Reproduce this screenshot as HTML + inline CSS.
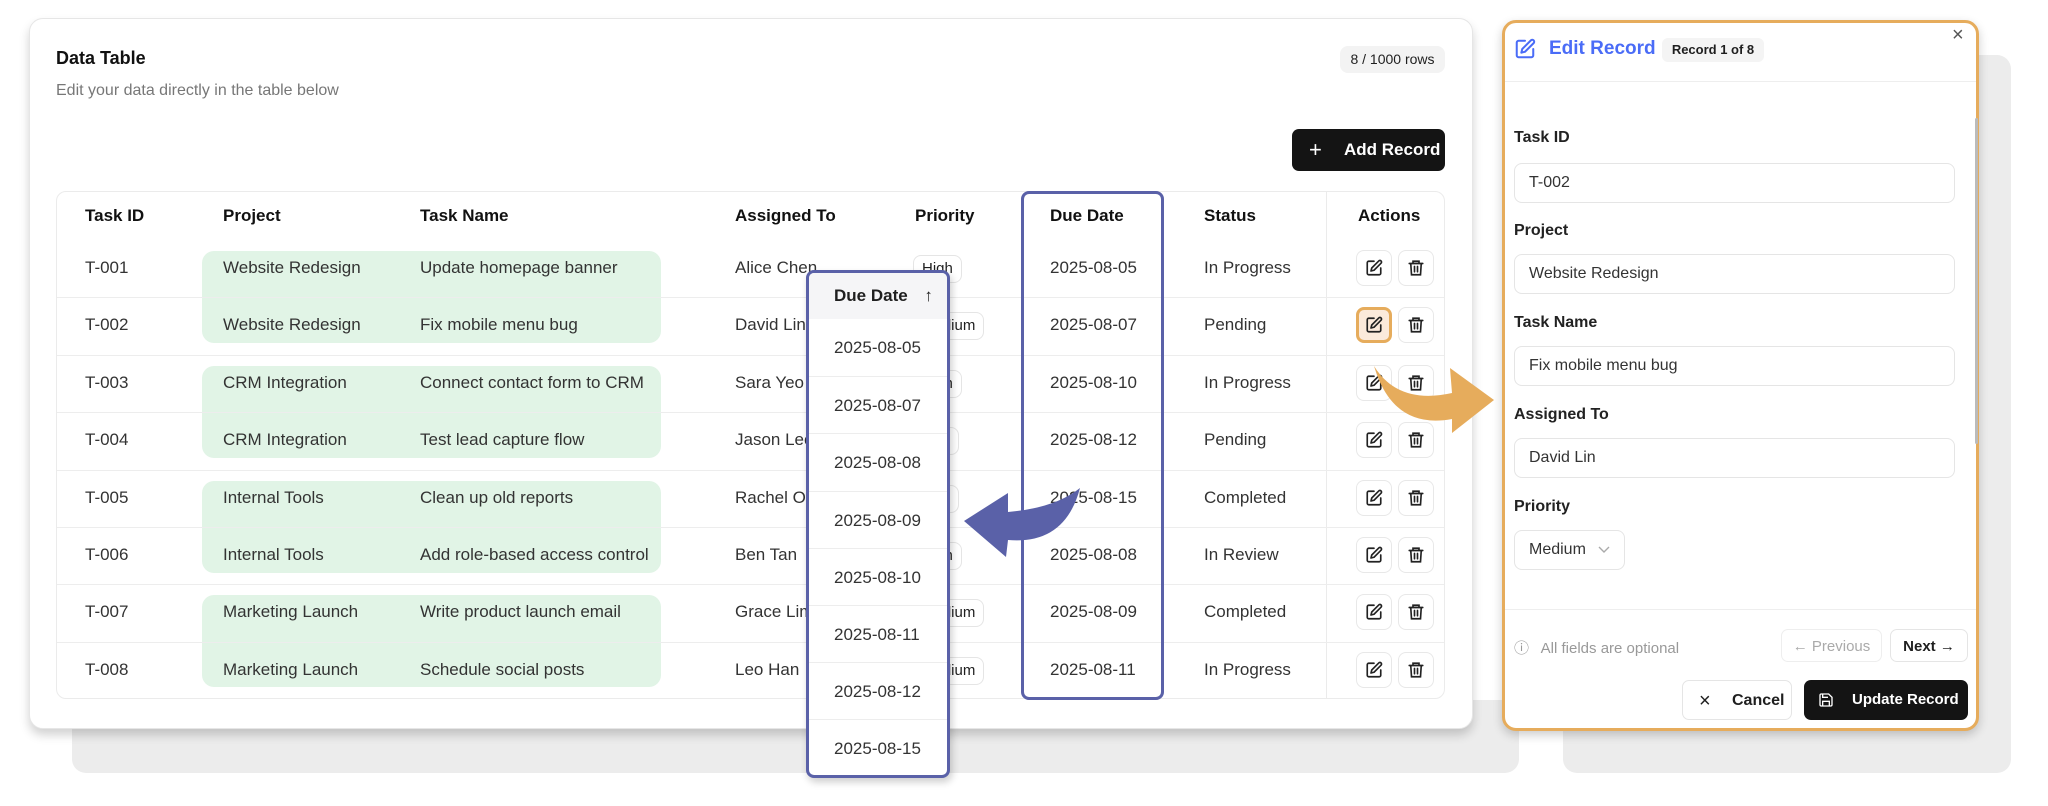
<!DOCTYPE html>
<html><head><meta charset="utf-8"><style>
*{box-sizing:border-box;margin:0;padding:0}
body{width:2048px;height:806px;background:#fff;position:relative;overflow:hidden;font-family:"Liberation Sans",sans-serif;color:#1f1f1f}
.abs{position:absolute}
.card{left:29px;top:18px;width:1444px;height:711px;background:#fff;border:1px solid #e6e6e6;border-radius:14px;box-shadow:0 6px 10px rgba(0,0,0,.18)}
.t{position:absolute;font-size:17px;white-space:nowrap}
.hd{font-weight:bold;color:#111}
.btn{position:absolute;width:36px;height:36px;border:1px solid #e8e8e8;border-radius:8px;background:#fff;display:flex;align-items:center;justify-content:center}
.badge{position:absolute;height:28px;border:1px solid #e5e5e5;border-radius:8px;font-size:15px;padding:4px 8px;background:#fff}
.lbl{position:absolute;left:1514px;font-size:16px;font-weight:bold;color:#222}
.inp{position:absolute;left:1514px;width:441px;height:40px;border:1px solid #e5e5e5;border-radius:8px;font-size:16px;padding:10px 14px;color:#333;white-space:nowrap}
</style></head><body>
<div class="abs" style="left:72px;top:700px;width:1447px;height:73px;background:#ececec;border-radius:0 0 14px 14px"></div>
<div class="abs" style="left:1563px;top:55px;width:448px;height:718px;background:#ececec;border-radius:14px"></div>
<div class="abs card"></div>
<div class="t hd" style="left:56px;top:48px;font-size:18px">Data Table</div>
<div class="t" style="left:56px;top:82px;font-size:16px;color:#777">Edit your data directly in the table below</div>
<div class="abs" style="left:1340px;top:46px;width:105px;height:27px;background:#f3f3f3;border-radius:8px;font-size:14px;text-align:center;line-height:27px">8 / 1000 rows</div>
<div class="abs" style="left:1292px;top:129px;width:153px;height:42px;background:#141414;border-radius:7px;color:#fff;font-size:17px;font-weight:bold;line-height:42px"><span style="position:absolute;left:17px;font-weight:normal;font-size:22px">+</span><span style="position:absolute;left:52px">Add Record</span></div>
<div class="abs" style="left:56px;top:191px;width:1389px;height:508px;border:1px solid #ebebeb;border-radius:10px"></div>
<div class="abs" style="left:1326px;top:191px;width:1px;height:508px;background:#ebebeb"></div>
<div id="rows"></div>
<div class="abs" style="left:1021px;top:191px;width:143px;height:509px;border:3px solid #5a61a8;border-radius:8px"></div>
<div class="abs" style="left:806px;top:270px;width:144px;height:508px;border:3px solid #5a61a8;border-radius:8px;background:#fff;box-shadow:2px 4px 8px rgba(0,0,0,.2);overflow:hidden" id="pop"></div>
<svg class="abs" style="left:0;top:0" width="2048" height="806">
<path d="M964,521 L1008,493 L1008,512 Q1055,508 1080,488 Q1065,545 1008,540 L1006,557 Z" fill="#5a61a8"/>
<path d="M1374,366 Q1398,405 1452,393 L1450,368 L1494,400 L1452,433 L1452,419 Q1393,430 1374,366 Z" fill="#e6ac5c"/>
</svg>
<div class="abs" style="left:1502px;top:20px;width:477px;height:711px;border:3px solid #e6ac5c;border-radius:14px;background:#fff;box-shadow:0 4px 10px rgba(0,0,0,.2)"></div>
<svg class="abs" style="left:1514px;top:38px" width="22" height="22" viewBox="0 0 24 24" fill="none" stroke="#4a6cf7" stroke-width="2.2" stroke-linecap="round" stroke-linejoin="round"><path d="M12 3H5a2 2 0 0 0-2 2v14a2 2 0 0 0 2 2h14a2 2 0 0 0 2-2v-7"/><path d="M18.4 2.6a2.1 2.1 0 0 1 3 3L12 15l-4 1 1-4z"/></svg>
<div class="t" style="left:1549px;top:38px;font-size:19px;color:#4a6cf7;font-weight:bold">Edit Record</div>
<div class="abs" style="left:1662px;top:38px;width:102px;height:24px;background:#f4f4f4;border-radius:6px;font-size:13px;font-weight:bold;text-align:center;line-height:24px">Record 1 of 8</div>
<div class="t" style="left:1952px;top:24px;font-size:20px;color:#555">×</div>
<div class="abs" style="left:1505px;top:81px;width:471px;height:1px;background:#eee"></div>
<div class="abs" style="left:1975px;top:118px;width:3px;height:326px;background:#bbb;border-radius:2px"></div>
<div class="lbl" style="top:129px">Task ID</div><div class="inp" style="top:163px">T-002</div>
<div class="lbl" style="top:222px">Project</div><div class="inp" style="top:254px">Website Redesign</div>
<div class="lbl" style="top:314px">Task Name</div><div class="inp" style="top:346px">Fix mobile menu bug</div>
<div class="lbl" style="top:406px">Assigned To</div><div class="inp" style="top:438px">David Lin</div>
<div class="lbl" style="top:498px">Priority</div><div class="inp" style="top:530px;width:111px">Medium <svg width="12" height="8" style="margin-left:8px" viewBox="0 0 12 8"><path d="M1 1l5 5 5-5" stroke="#aaa" fill="none" stroke-width="1.4"/></svg></div>
<div class="abs" style="left:1505px;top:609px;width:471px;height:1px;background:#eee"></div>
<div class="t" style="left:1514px;top:637px;font-size:15px;color:#999">ⓘ&nbsp;&nbsp; All fields are optional</div>
<div class="abs" style="left:1781px;top:629px;width:101px;height:33px;border:1px solid #eee;border-radius:7px;font-size:15px;color:#aaa;text-align:center;line-height:33px">← Previous</div>
<div class="abs" style="left:1890px;top:629px;width:78px;height:33px;border:1px solid #e5e5e5;border-radius:7px;font-size:15px;font-weight:bold;text-align:center;line-height:33px">Next →</div>
<div class="abs" style="left:1682px;top:680px;width:110px;height:40px;border:1px solid #e5e5e5;border-radius:7px;font-size:16px;font-weight:bold;line-height:40px"><span style="position:absolute;left:16px;font-weight:normal;font-size:20px">×</span><span style="position:absolute;left:49px">Cancel</span></div>
<div class="abs" style="left:1804px;top:680px;width:164px;height:40px;background:#141414;border-radius:7px;color:#fff;font-size:15px;font-weight:bold;line-height:40px"><svg style="position:absolute;left:14px;top:12px" width="16" height="16" viewBox="0 0 24 24" fill="none" stroke="#fff" stroke-width="2"><path d="M5 3h11l5 5v11a2 2 0 0 1-2 2H5a2 2 0 0 1-2-2V5a2 2 0 0 1 2-2z"/><path d="M7 21v-7h10v7M7 3v5h8"/></svg><span style="position:absolute;left:48px">Update Record</span></div>
<script>
var R=[["T-001","Website Redesign","Update homepage banner","Alice Chen","High","2025-08-05","In Progress"],
["T-002","Website Redesign","Fix mobile menu bug","David Lin","Medium","2025-08-07","Pending"],
["T-003","CRM Integration","Connect contact form to CRM","Sara Yeo","High","2025-08-10","In Progress"],
["T-004","CRM Integration","Test lead capture flow","Jason Lee","Low","2025-08-12","Pending"],
["T-005","Internal Tools","Clean up old reports","Rachel Ong","Low","2025-08-15","Completed"],
["T-006","Internal Tools","Add role-based access control","Ben Tan","High","2025-08-08","In Review"],
["T-007","Marketing Launch","Write product launch email","Grace Lim","Medium","2025-08-09","Completed"],
["T-008","Marketing Launch","Schedule social posts","Leo Han","Medium","2025-08-11","In Progress"]];
var X=[85,223,420,735,915,1050,1204];
var h='';
["Task ID","Project","Task Name","Assigned To","Priority","Due Date","Status"].forEach(function(s,i){h+='<div class="t hd" style="left:'+X[i]+'px;top:206px">'+s+'</div>'});
h+='<div class="t hd" style="left:1358px;top:206px">Actions</div>';
for(var p=0;p<4;p++)h+='<div class="abs" style="left:202px;top:'+(251+p*114.8)+'px;width:459px;height:92px;background:#e1f4e6;border-radius:12px"></div>';
var ed='<svg width="18" height="18" viewBox="0 0 24 24" fill="none" stroke="#222" stroke-width="2.2" stroke-linecap="round" stroke-linejoin="round"><path d="M12 3H5a2 2 0 0 0-2 2v14a2 2 0 0 0 2 2h14a2 2 0 0 0 2-2v-7"/><path d="M18.4 2.6a2.1 2.1 0 0 1 3 3L12 15l-4 1 1-4z"/></svg>';
var tr='<svg width="18" height="18" viewBox="0 0 24 24" fill="none" stroke="#222" stroke-width="2.2" stroke-linecap="round"><path d="M3 6h18M8 6V3h8v3M5 6l1 15h12l1-15M10 10v7M14 10v7"/></svg>';
R.forEach(function(r,i){var y=240+i*57.4;if(i>0)h+='<div class="abs" style="left:57px;top:'+y+'px;width:1387px;height:1px;background:#ededed"></div>';var ty=y+18;
r.forEach(function(s,j){if(j==4)h+='<div class="badge" style="left:913px;top:'+(y+15)+'px">'+s+'</div>';else h+='<div class="t" style="left:'+X[j]+'px;top:'+ty+'px;color:#333">'+s+'</div>'});
var hl=i==1?'background:#fbeadb;border:3px solid #e6ac5c;':'';
h+='<div class="btn" style="left:1356px;top:'+(y+10)+'px;'+hl+'">'+ed+'</div><div class="btn" style="left:1398px;top:'+(y+10)+'px">'+tr+'</div>';});
document.getElementById('rows').innerHTML=h;
var d=["2025-08-05","2025-08-07","2025-08-08","2025-08-09","2025-08-10","2025-08-11","2025-08-12","2025-08-15"];
var q='<div style="height:46px;background:#f5f5f7;font-size:17px;font-weight:bold;padding:13px 0 0 25px">Due Date <span style="margin-left:12px;font-weight:normal">↑</span></div>';
d.forEach(function(s,i){q+='<div style="height:57.2px;border-top:'+(i?'1px solid #ededed':'0')+';font-size:17px;color:#333;padding:19px 0 0 25px">'+s+'</div>'});
document.getElementById('pop').innerHTML=q;
</script>
</body></html>
